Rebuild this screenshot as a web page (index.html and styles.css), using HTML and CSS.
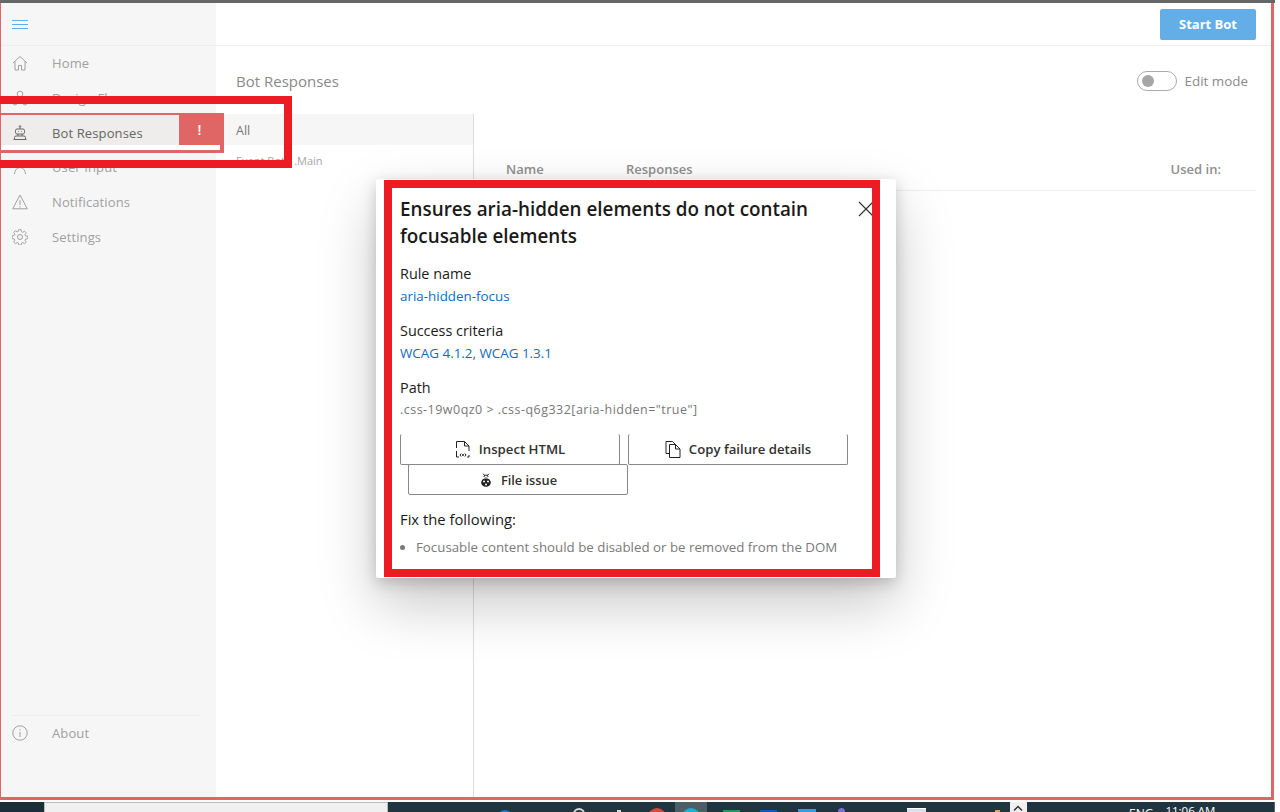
FILE: index.html
```html
<!DOCTYPE html>
<html lang="en">
<head>
<meta charset="utf-8">
<title>Bot Responses</title>
<link rel="stylesheet" href="styles.css">
</head>
<body>
<div class="screen">
  <div class="topline"></div>
  <div class="frame">
    <aside class="sidebar">
      <div class="side-head">
        <svg class="burger" width="16" height="10" viewBox="0 0 16 10"><path d="M0 .5h16M0 4.500h16M0 8.500h16"/></svg>
      </div>
      <nav class="nav">
        <div class="nav-item"><svg class="ico" viewBox="0 0 16 16"><path d="M1 8 8 1.500 15 8M3 6.500V15h3.500v-4.500h3V15H13V6.500"/></svg><span>Home</span></div>
        <div class="nav-item"><svg class="ico" viewBox="0 0 16 16"><circle cx="8" cy="4" r="2.800"/><circle cx="3" cy="13" r="2"/><circle cx="13" cy="13" r="2"/><path d="M8 7v3M3 11l5-1 5 1"/></svg><span>Design Flow</span></div>
        <div class="nav-item active"><svg class="ico dark" viewBox="0 0 16 16"><circle cx="8" cy="1.500" r=".8"/><path d="M8 2.500v1.500M5 4h6q1.500 0 1.500 1.500v2Q12.500 9 11 9H5Q3.500 9 3.500 7.500v-2Q3.500 4 5 4zM6 9v2M10 9v2M2.500 14.500v-2q0-1.500 1.500-1.500h8q1.500 0 1.500 1.500v2M1.500 14.500h13"/><path d="M6 6.500h.6M9.400 6.500h.6"/></svg><span>Bot Responses</span></div>
        <div class="nav-item"><svg class="ico" viewBox="0 0 16 16"><circle cx="8" cy="5" r="3.500"/><path d="M2.500 15q.5-6 5.500-6.500q5 .5 5.500 6.500"/></svg><span>User Input</span></div>
        <div class="nav-item"><svg class="ico" viewBox="0 0 16 16"><path d="M8 1 15.300 14.800H.7zM8 6v5M8 12.200v1.300"/></svg><span>Notifications</span></div>
        <div class="nav-item"><svg class="ico" viewBox="0 0 16 16"><circle cx="8" cy="8" r="2.500"/><path d="M6.800 .8h2.400l.4 2.100 1.300.6 1.800-1.200 1.700 1.700-1.200 1.800.6 1.300 2.100.4v2.400l-2.100.4-.6 1.300 1.200 1.800-1.700 1.700-1.800-1.200-1.300.6-.4 2.100H6.800l-.4-2.100-1.300-.6-1.800 1.200-1.700-1.700 1.200-1.800-.6-1.300-2.100-.4V7l2.100-.4.6-1.300L1.600 3.500l1.700-1.700 1.800 1.200 1.300-.6z" transform="translate(.1 -.1) scale(.98)"/></svg><span>Settings</span></div>
      </nav>
      <div class="side-foot">
        <div class="nav-item"><svg class="ico" viewBox="0 0 16 16"><circle cx="8" cy="8" r="7.200"/><path d="M8 7v5M8 4.200v1.300"/></svg><span>About</span></div>
      </div>
    </aside>
    <main class="main">
      <header class="appbar"><button class="start">Start Bot</button></header>
      <div class="titlebar">
        <h1 class="page-title">Bot Responses</h1>
        <div class="edit"><span class="toggle"><span class="knob"></span></span><span>Edit mode</span></div>
      </div>
      <div class="panes">
        <div class="list">
          <div class="list-all">All</div>
          <div class="list-sub">Event.Bot.1.Main</div>
        </div>
        <div class="table">
          <div class="thead"><span class="c-name">Name</span><span class="c-resp">Responses</span><span class="c-used">Used in:</span></div>
        </div>
      </div>
    </main>
  </div>
  <div class="taskbar">
    <div class="tb-start"></div>
    <div class="tb-search"></div>
    <i class="tb-i blue-round"></i>
    <i class="tb-i white-dot"></i>
    <i class="tb-i white-tiny"></i>
    <i class="tb-i red-round"></i>
    <div class="tb-active"><i class="cyan-round"></i></div>
    <i class="tb-i green-sq"></i>
    <i class="tb-i navy-sq"></i>
    <i class="tb-i sky-sq"></i>
    <i class="tb-i violet-dot"></i>
    <i class="tb-i win-sq"></i>
    <i class="tb-i orange"></i>
    <div class="tb-chev"><svg width="10" height="6" viewBox="0 0 10 6"><path d="M1 5.500 5 1.500 9 5.500"/></svg></div>
    <span class="tb-lang">ENG</span>
    <span class="tb-time">11:06 AM</span>
  </div>

  <div class="mark">
    <div class="mark-top"><b class="mark-badge">!</b></div>
    <div class="mark-strip"></div>
  </div>
  <div class="redbox redbox-nav"></div>

  <section class="modal">
    <button class="close" aria-label="Close"><svg width="16" height="16" viewBox="0 0 16 16"><path d="M1 1l14 14M15 1 1 15"/></svg></button>
    <h2 class="m-title">Ensures aria-hidden elements do not contain focusable elements</h2>
    <h3 class="m-label first">Rule name</h3>
    <a class="m-link">aria-hidden-focus</a>
    <h3 class="m-label">Success criteria</h3>
    <a class="m-link">WCAG 4.1.2, WCAG 1.3.1</a>
    <h3 class="m-label">Path</h3>
    <p class="m-path">.css-19w0qz0 &gt; .css-q6g332[aria-hidden="true"]</p>
    <div class="m-row">
      <button class="btn no-top"><svg class="b-ico" width="16" height="18" viewBox="0 0 16 18"><path d="M1.500 8V1.500h8L14 6v5M9.500 1.500V6H14M1.500 11v6H4M14 15v2h-2"/><path d="M6.200 13.500 5 15l1.200 1.500M9.800 13.500 11 15l-1.200 1.500"/><circle cx="8" cy="15" r="1" class="fill"/></svg>Inspect HTML</button>
      <button class="btn no-top"><svg class="b-ico" width="16" height="18" viewBox="0 0 16 18"><path d="M4.500 13.500H1V1.500h6.500L10.500 4.500M4.500 4.500h6L15 9v8.500H4.500zM10.500 4.500V9H15"/></svg>Copy failure details</button>
    </div>
    <div class="m-row second">
      <button class="btn small"><svg class="b-ico" width="14" height="14" viewBox="0 0 14 14"><path class="fill" d="M7 4.500c-1 0-1.800.3-2.300.9h4.600C8.800 4.800 8 4.500 7 4.500zM4.200 6h5.600c1.300.8 2 2.300 2 3.800 0 2.300-2 4-4.800 4s-4.800-1.700-4.800-4c0-1.500.7-3 2-3.800z"/><path d="M4 .7l1.500 1.500h3L10 .7M5.500 2.200 5 4M8.500 2.200 9 4" /><circle cx="5" cy="8.500" r="1" class="hole"/><circle cx="9" cy="8.500" r="1" class="hole"/><circle cx="7" cy="11.500" r="1" class="hole"/></svg>File issue</button>
    </div>
    <h3 class="m-fix">Fix the following:</h3>
    <ul class="m-list"><li>Focusable content should be disabled or be removed from the DOM</li></ul>
  </section>
  <div class="redbox redbox-modal"></div>
</div>
</body>
</html>
```

FILE: styles.css
```css
* { box-sizing: border-box; }
html, body { margin: 0; padding: 0; background: #fff; }
body { font-family: "Open Sans", "Noto Sans", sans-serif; overflow: hidden; }
.screen { position: relative; width: 1275px; height: 812px; display: flex; flex-direction: column; overflow: hidden; }
.topline { height: 3px; background: #666; flex: none; }
.frame { height: 797px; flex: none; display: flex; border-left: 1px solid #e06666; border-right: 3px solid #e06666; border-bottom: 3px solid #e06666; margin-right: 1px; }

.sidebar { width: 215px; flex: none; background: #f6f6f6; display: flex; flex-direction: column; }
.side-head { height: 43px; border-bottom: 1px solid #eee; padding: 17px 0 0 11px; flex: none; }
.burger { display: block; }
.burger path { fill: none; stroke: #64aee8; stroke-width: 1; }
.nav { flex: 1; }
.nav-item { height: 34.670px; display: flex; align-items: center; padding-left: 11px; font-size: 13px; color: #a0a0a0; letter-spacing: .12px; }
.nav-item span { margin-left: 24px; }
.nav-item.active { background: #eeedeb; color: #666; }
.ico { width: 16px; height: 16px; flex: none; fill: none; stroke: #a0a0a0; stroke-width: 1; }
.ico.dark { stroke: #666; }
.side-foot { margin: 0 16px 47px 11px; border-top: 1px solid #ececec; }
.side-foot .nav-item { padding-left: 0; height: 33.670px; }

.main { flex: 1; min-width: 0; display: flex; flex-direction: column; }
.appbar { height: 43px; border-bottom: 1px solid #eee; display: flex; justify-content: flex-end; align-items: flex-start; padding: 6px 15px 0 0; flex: none; }
.start { width: 96px; height: 31px; background: #64aee8; color: #fff; border: 0; border-radius: 2px; font: 700 13px "Open Sans", sans-serif; padding: 0 0 2px; }
.titlebar { height: 68px; flex: none; display: flex; justify-content: space-between; align-items: flex-start; padding: 24px 23px 0 20px; }
.page-title { margin: 0; font-size: 15px; font-weight: 400; line-height: 22px; color: #8a8a8a; }
.edit { display: flex; align-items: center; gap: 8px; font-size: 13.400px; color: #8a8a8a; line-height: 22px; }
.toggle { width: 40px; height: 20px; border: 1px solid #aaa; border-radius: 10px; display: flex; align-items: center; padding-left: 4px; }
.knob { width: 12px; height: 12px; background: #a6a6a6; border-radius: 50%; }
.panes { flex: 1; display: flex; min-height: 0; }
.list { width: 258px; flex: none; border-right: 1px solid #ddd; }
.list-all { height: 31px; background: #f6f6f6; padding-left: 20px; font-size: 12.500px; line-height: 33px; color: #777; }
.list-sub { font-size: 11px; color: #a4a4a4; padding: 8px 0 0 20px; line-height: 16px; }
.table { flex: 1; padding: 44px 15px 0 16px; }
.thead { height: 33px; border-bottom: 1px solid #eee; display: flex; font-size: 13px; font-weight: 600; color: #8f8f8f; padding-left: 16px; line-height: 22px; }
.c-name { width: 120px; }
.c-resp { flex: 1; }
.c-used { margin-right: 35px; }

.taskbar { height: 10px; margin-top: 2px; flex: none; background: #1f3641; display: flex; align-items: flex-start; overflow: hidden; position: relative; border-right: 1px solid #56646b; }
.tb-start { width: 44px; flex: none; background: #1a2f38; height: 10px; }
.tb-search { width: 344px; flex: none; height: 10px; background: #f0f0f0; border: 1px solid #bbb; border-bottom: 0; }
.tb-i { display: block; flex: none; }
.blue-round { width: 16px; height: 16px; border-radius: 50%; background: #0f7bd0; margin: 8px 0 0 109px; }
.white-dot { width: 12px; height: 12px; border-radius: 50%; border: 2px solid #d8d8d8; margin: 6px 0 0 60px; }
.white-tiny { width: 4px; height: 4px; background: #d8d8d8; margin: 8px 0 0 32px; }
.red-round { width: 18px; height: 18px; border-radius: 50%; background: #d9483b; margin: 6px 0 0 27px; }
.tb-active { width: 32px; height: 10px; background: #4d5e67; flex: none; margin-left: 9px; display: flex; justify-content: center; }
.cyan-round { display: block; width: 18px; height: 18px; border-radius: 50%; background: #17b4d2; margin-top: 6px; }
.green-sq { width: 17px; height: 10px; background: #1a9a5a; margin: 8px 0 0 16px; }
.navy-sq { width: 17px; height: 10px; background: #0c5ea8; margin: 8px 0 0 20px; }
.sky-sq { width: 18px; height: 10px; background: #3a9be0; margin: 7px 0 0 21px; }
.violet-dot { width: 7px; height: 10px; border-radius: 4px; background: #7a6fd8; margin: 6px 0 0 22px; }
.win-sq { width: 19px; height: 10px; background: #d8e0f0; border-top: 1px solid #fff; margin: 6px 0 0 62px; }
.orange { width: 5px; height: 10px; background: #e0a050; margin: 8px 0 0 69px; }
.tb-chev { width: 17px; height: 10px; flex: none; background: #f0f0f0; margin-left: 10px; padding: 3px 0 0 3px; }
.tb-chev svg { display: block; }
.tb-chev path { fill: none; stroke: #333; stroke-width: 1.500; }
.tb-lang { font-size: 12px; line-height: 16px; color: #fff; margin: 4px 0 0 102px; white-space: nowrap; }
.tb-time { font-size: 11.500px; line-height: 16px; color: #fff; margin: 1px 0 0 12px; white-space: nowrap; }

.mark { position: absolute; left: 0; top: 113px; width: 224px; height: 40px; border: solid #e06666; border-width: 2px 4px 3px 1px; display: flex; flex-direction: column; }
.mark-top { height: 30px; display: flex; justify-content: flex-end; }
.mark-badge { width: 41px; margin-top: -2px; height: 32px; background: #e06666; color: #fff; font-size: 14px; font-weight: 600; display: flex; align-items: center; justify-content: center; }
.mark-strip { height: 5px; background: #fff; }
.redbox { position: absolute; border: 8px solid #ed1c24; pointer-events: none; }
.redbox-nav { left: -10px; top: 96px; width: 302px; height: 72px; }
.redbox-modal { left: 384px; top: 180px; width: 496px; height: 397px; }

.modal { position: absolute; left: 376px; top: 179px; width: 520px; height: 399px; background: #fff; border-radius: 2px; padding: 17px 24px 0; color: #1b1a19; box-shadow: 0 25.600px 57.600px rgba(0,0,0,.22), 0 4.800px 14.400px rgba(0,0,0,.18); }
.m-title { margin: 0; width: 430px; font-size: 18.850px; font-weight: 600; line-height: 27px; }
.close { position: absolute; left: 482px; top: 22px; width: 16px; height: 16px; padding: 0; border: 0; background: none; }
.close svg { display: block; }
.close path { fill: none; stroke: #333; stroke-width: 1.200; }
.m-label { margin: 3px 0 0; font-size: 14.400px; font-weight: 500; line-height: 21px; padding-top: 11px; }
.m-label.first { margin-top: 0; padding-top: 13px; }
.m-link { display: block; margin-top: 2px; font-size: 13.400px; line-height: 20px; color: #0f6cbd; }
.m-path { margin: 2px 0 0; font-size: 12.500px; line-height: 20px; color: #777; letter-spacing: .48px; white-space: nowrap; }
.m-row { display: flex; gap: 8px; margin-top: 14px; }
.m-row.second { margin: -1px 0 0 8px; }
.btn { width: 220px; height: 31px; background: #fff; border: 1px solid #8a8886; border-radius: 2px; font: 600 13.200px "Open Sans", sans-serif; color: #323130; display: flex; align-items: center; justify-content: center; gap: 8px; padding: 0; }
.btn.no-top { border-top: 0; }
.btn.small { font-size: 12.800px; }
.b-ico { fill: none; stroke: #222; stroke-width: 1; flex: none; }
.b-ico .fill { fill: #222; stroke: none; }
.b-ico .hole { fill: #fff; stroke: none; }
.m-fix { margin: 13px 0 0; font-size: 14.800px; font-weight: 500; line-height: 22px; }
.m-list { margin: 7px 0 0; padding: 0 0 0 16px; font-size: 13.300px; line-height: 20px; color: #7a7a7a; white-space: nowrap; }
```
